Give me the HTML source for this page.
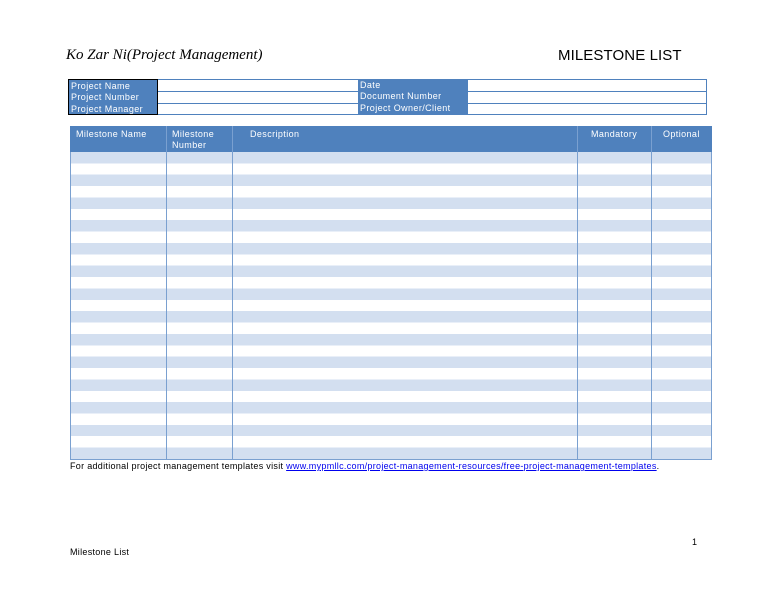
<!DOCTYPE html>
<html><head><style>
body{margin:0;width:768px;height:594px;background:#fff;position:relative;font-family:"Liberation Sans",sans-serif;overflow:hidden}
.a{position:absolute}
.title{left:66px;top:47px;font-family:"Liberation Serif",serif;font-style:italic;font-size:15px}
.ml{left:558px;top:47px;font-size:15px;letter-spacing:0.1px}
.info{left:68px;top:79px;width:639px;height:36px;border:1px solid #4f81bd;box-sizing:border-box}
.lab{background:#4f81bd;color:#fff;font-size:9px;line-height:11.3px;padding-left:2px;box-sizing:border-box;letter-spacing:0.4px;padding-top:1px}
.tbl{left:70px;top:126px;width:642px;height:334px;border:1px solid #7aa0d0;box-sizing:border-box;
background:repeating-linear-gradient(#d3dff0 0 11.37px,#fff 11.37px 22.74px);background-position:0 25px;}
.hd{left:70px;top:126px;width:642px;height:26px;background:#4f81bd}
.th{color:#fff;font-size:9px;top:129px;line-height:11px;letter-spacing:0.4px}
.vl{top:126px;width:1px;height:334px;background:#7aa0d0}
</style></head><body>
<div class="a title">Ko Zar Ni(Project Management)</div>
<div class="a ml">MILESTONE LIST</div>
<div class="a info"></div>
<div class="a lab" style="left:68px;top:79px;width:90px;height:36px;border:1px solid #000">Project Name<br>Project Number<br>Project Manager</div>
<div class="a lab" style="left:358px;top:79px;width:110px;height:36px">Date<br>Document Number<br>Project Owner/Client</div>
<div class="a" style="left:158px;top:91px;width:200px;height:1px;background:#4f81bd"></div>
<div class="a" style="left:158px;top:103px;width:200px;height:1px;background:#4f81bd"></div>
<div class="a" style="left:468px;top:91px;width:239px;height:1px;background:#4f81bd"></div>
<div class="a" style="left:468px;top:103px;width:239px;height:1px;background:#4f81bd"></div>
<div class="a tbl"></div>
<div class="a hd"></div>
<div class="a vl" style="left:166px"></div>
<div class="a vl" style="left:232px"></div>
<div class="a vl" style="left:577px"></div>
<div class="a vl" style="left:651px"></div>
<div class="a th" style="left:76px">Milestone Name</div>
<div class="a th" style="left:172px">Milestone<br>Number</div>
<div class="a th" style="left:250px">Description</div>
<div class="a th" style="left:591px">Mandatory</div>
<div class="a th" style="left:663px">Optional</div>
<div class="a" style="left:70px;top:461px;font-size:9px;letter-spacing:0.3px">For additional project management templates visit <span style="color:#00e;text-decoration:underline">www.mypmllc.com/project-management-resources/free-project-management-templates</span>.</div>
<div class="a" style="left:692px;top:537px;font-size:9px">1</div>
<div class="a" style="left:70px;top:547px;font-size:9px;letter-spacing:0.3px">Milestone List</div>
</body></html>
